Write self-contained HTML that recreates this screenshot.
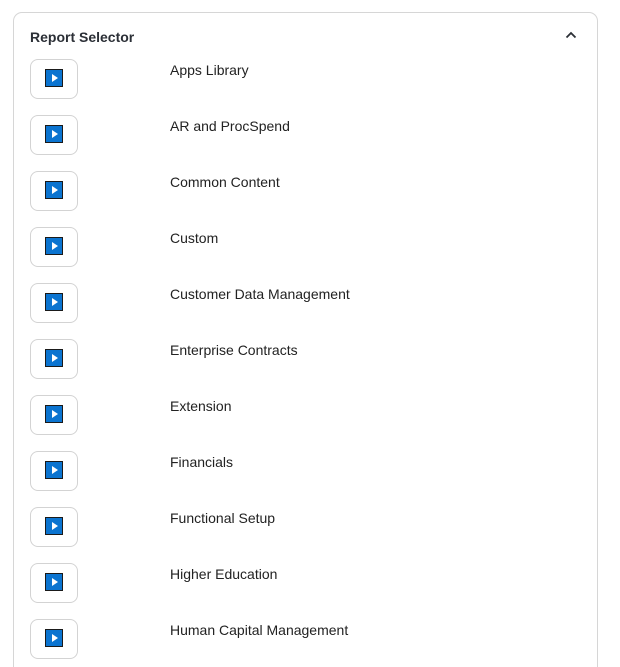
<!DOCTYPE html>
<html><head><style>
html,body{margin:0;height:667px;overflow:hidden;}
body{background:#fff;font-family:"Liberation Sans",sans-serif;color:#1f2328;position:relative;}
.card{position:absolute;left:13px;top:12px;width:583px;height:655px;border:1px solid #d6d6d6;border-bottom:none;border-radius:9px 9px 0 0;}
.title{position:absolute;left:16px;top:16px;font-size:14px;font-weight:bold;color:#2b2f36;}
.chev{position:absolute;left:550px;top:17px;}
.row{position:absolute;left:16px;height:40px;}
.btn{position:absolute;left:0;top:0;width:46px;height:38px;border:1px solid #d3d3d3;border-radius:8px;background:#fff;}
.ic{position:absolute;left:14px;top:9px;width:16px;height:16px;background:#0b74d0;border:1px solid #1a1a1a;}
.ic:after{content:"";position:absolute;left:6px;top:4px;border-left:6px solid #fff;border-top:4px solid transparent;border-bottom:4px solid transparent;}
.lbl{position:absolute;left:140px;top:3px;font-size:14px;white-space:nowrap;color:#222;}
</style></head><body>
<div class="card">
<div class="title">Report Selector</div>
<svg class="chev" width="14" height="10" viewBox="0 0 14 10"><path d="M2.5 7.5L7 3l4.5 4.5" fill="none" stroke="#2b2f36" stroke-width="1.8"/></svg>
<div class="row" style="top:46px"><div class="btn"><div class="ic"></div></div><div class="lbl">Apps Library</div></div>
<div class="row" style="top:102px"><div class="btn"><div class="ic"></div></div><div class="lbl">AR and ProcSpend</div></div>
<div class="row" style="top:158px"><div class="btn"><div class="ic"></div></div><div class="lbl">Common Content</div></div>
<div class="row" style="top:214px"><div class="btn"><div class="ic"></div></div><div class="lbl">Custom</div></div>
<div class="row" style="top:270px"><div class="btn"><div class="ic"></div></div><div class="lbl">Customer Data Management</div></div>
<div class="row" style="top:326px"><div class="btn"><div class="ic"></div></div><div class="lbl">Enterprise Contracts</div></div>
<div class="row" style="top:382px"><div class="btn"><div class="ic"></div></div><div class="lbl">Extension</div></div>
<div class="row" style="top:438px"><div class="btn"><div class="ic"></div></div><div class="lbl">Financials</div></div>
<div class="row" style="top:494px"><div class="btn"><div class="ic"></div></div><div class="lbl">Functional Setup</div></div>
<div class="row" style="top:550px"><div class="btn"><div class="ic"></div></div><div class="lbl">Higher Education</div></div>
<div class="row" style="top:606px"><div class="btn"><div class="ic"></div></div><div class="lbl">Human Capital Management</div></div>
</div>
</body></html>
